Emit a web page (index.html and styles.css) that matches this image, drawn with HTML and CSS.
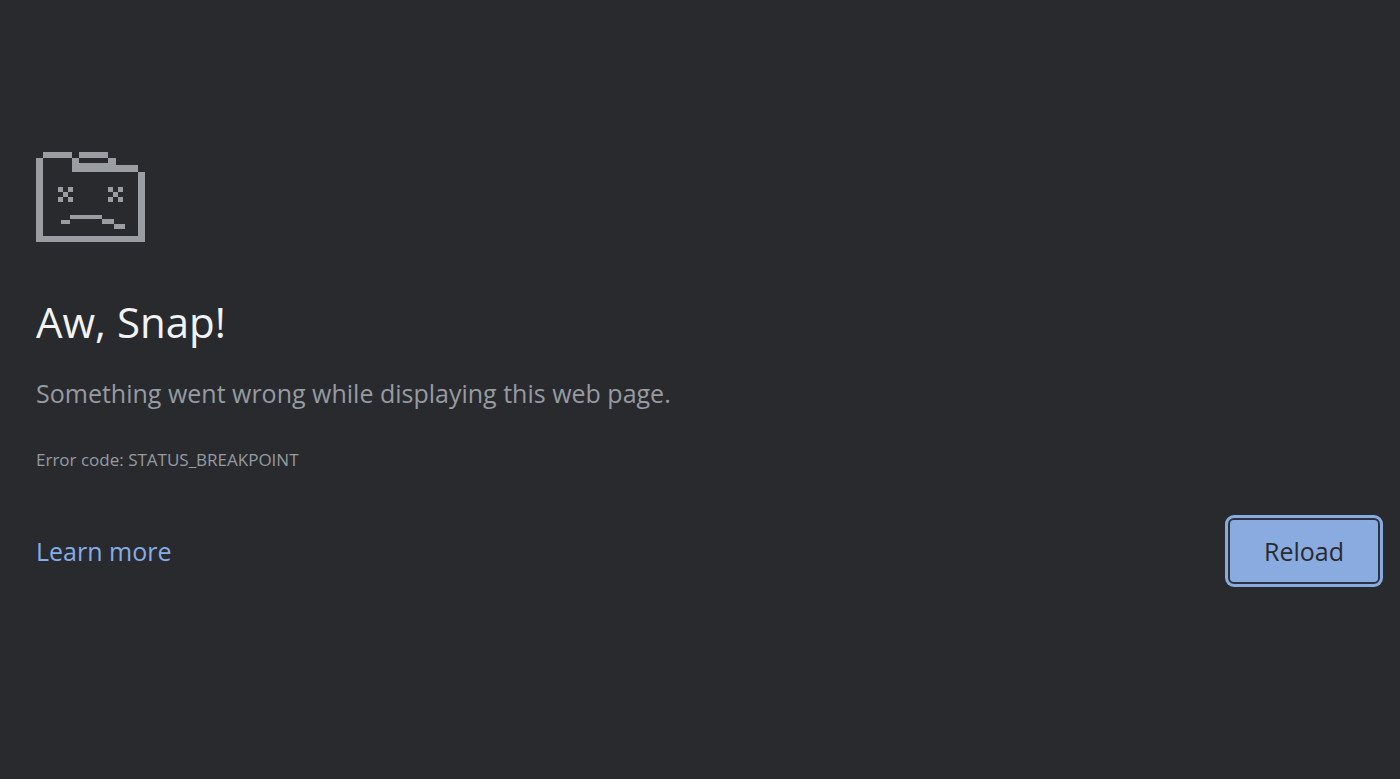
FILE: index.html
```html
<!DOCTYPE html>
<html lang="en">
<head>
<meta charset="utf-8">
<title>Aw, Snap!</title>
<link rel="stylesheet" href="styles.css">
</head>
<body>
<main class="page">
  <svg class="icon" viewBox="0 0 109 91" width="109" height="91" aria-hidden="true">
    <g class="icon-line">
      <rect x="0" y="7" width="7" height="84"/>
      <rect x="7" y="1" width="29" height="6"/>
      <rect x="43" y="1" width="29" height="6"/>
      <rect x="43" y="12" width="29" height="2"/>
      <rect x="36" y="7" width="7" height="14"/>
      <rect x="72" y="7" width="8" height="7"/>
      <rect x="36" y="14" width="66" height="7"/>
      <rect x="102" y="21" width="7" height="70"/>
      <rect x="0" y="85" width="109" height="6"/>
      <rect x="22" y="36" width="5" height="5"/>
      <rect x="32" y="36" width="5" height="5"/>
      <rect x="27" y="41" width="5" height="5"/>
      <rect x="22" y="46" width="5" height="5"/>
      <rect x="32" y="46" width="5" height="5"/>
      <rect x="72" y="36" width="5" height="5"/>
      <rect x="82" y="36" width="5" height="5"/>
      <rect x="77" y="41" width="5" height="5"/>
      <rect x="72" y="46" width="5" height="5"/>
      <rect x="82" y="46" width="5" height="5"/>
      <rect x="34" y="64" width="32" height="4"/>
      <rect x="25" y="69" width="9" height="4"/>
      <rect x="66" y="68" width="12" height="5"/>
      <rect x="78" y="73" width="11" height="5"/>
    </g>
  </svg>
  <h1 class="title">Aw, Snap!</h1>
  <p class="message">Something went wrong while displaying this web page.</p>
  <p class="code">Error code: STATUS_BREAKPOINT</p>
  <div class="actions">
    <a class="link" href="#">Learn more</a>
    <button class="reload" type="button">Reload</button>
  </div>
</main>
</body>
</html>
```
FILE: styles.css
```css
html, body {
  margin: 0;
  height: 100%;
}
body {
  background: #292a2e;
  font-family: "Open Sans", "Noto Sans", sans-serif;
  overflow: hidden;
}
.page {
  display: flex;
  flex-direction: column;
  align-items: flex-start;
  padding: 151px 20px 0 36px;
}
.icon {
  display: block;
}
.icon-line rect {
  fill: #9a9da1;
}
.title {
  margin: 51px 0 0;
  font-size: 42px;
  line-height: 58px;
  font-weight: 400;
  color: #f1f3f5;
}
.message {
  margin: 25px 0 0;
  font-size: 25px;
  line-height: 34px;
  color: #959ba1;
}
.code {
  margin: 38px 0 0;
  font-size: 17px;
  line-height: 24px;
  color: #959ba1;
}
.actions {
  align-self: stretch;
  display: flex;
  justify-content: space-between;
  align-items: center;
  margin-top: 46px;
}
.link {
  font-size: 25px;
  color: #86ade8;
  text-decoration: none;
}
.reload {
  width: 152px;
  height: 66px;
  border: 2px solid #2d3440;
  border-radius: 6px;
  background: #8aabe0;
  box-shadow: 0 0 0 3px #8aabe0;
  font: 25px "Open Sans", "Noto Sans", sans-serif;
  color: #292a2e;
}
```
